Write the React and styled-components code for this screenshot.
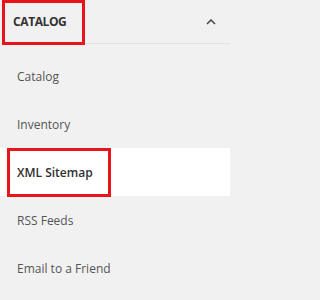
import React from "react";
import styled, { createGlobalStyle } from "styled-components";

const Global = createGlobalStyle`
  html, body { margin: 0; padding: 0; background: #f1f1f1; }
  body { font-family: "Open Sans", "Liberation Sans", sans-serif; }
`;

const Panel = styled.div`
  width: 230px;
  height: 300px;
  background: #f1f1f1;
  overflow: hidden;
`;

const Header = styled.div`
  position: relative;
  height: 43px;
  display: flex;
  align-items: center;
  justify-content: space-between;
  padding: 0 14px 0 13px;
  border-bottom: 1px solid #e3e3e3;
`;

const Title = styled.span`
  font-size: 12px;
  font-weight: 700;
  color: #333;
  letter-spacing: -0.4px;
`;

const Highlight = styled.div`
  position: absolute;
  left: ${(p) => p.$left}px;
  top: ${(p) => p.$top}px;
  width: ${(p) => p.$w}px;
  height: ${(p) => p.$h}px;
  border: 3px solid #e8141b;
  box-sizing: border-box;
  pointer-events: none;
`;

const List = styled.ul`
  list-style: none;
  margin: 0;
  padding: 8px 0 0;
`;

const Item = styled.li`
  position: relative;
  height: 48px;
  display: flex;
  align-items: center;
  padding-left: 17px;
  font-size: 12px;
  color: ${(p) => (p.$active ? "#303030" : "#555")};
  font-weight: ${(p) => (p.$active ? 600 : 400)};
  background: ${(p) => (p.$active ? "#fff" : "transparent")};
`;

const Chevron = () => (
  <svg width="10" height="6" viewBox="0 0 10 6">
    <path d="M1 5 L5 1 L9 5" fill="none" stroke="#444" strokeWidth="1.5" />
  </svg>
);

const items = ["Catalog", "Inventory", "XML Sitemap", "RSS Feeds", "Email to a Friend"];

export default function App() {
  return (
    <Panel>
      <Global />
      <Header>
        <Title>CATALOG</Title>
        <Chevron />
        <Highlight $left={2} $top={0} $w={83} $h={45} />
      </Header>
      <List>
        {items.map((t) => (
          <Item key={t} $active={t === "XML Sitemap"}>
            {t}
            {t === "XML Sitemap" && <Highlight $left={7} $top={0} $w={104} $h={49} />}
          </Item>
        ))}
      </List>
    </Panel>
  );
}
